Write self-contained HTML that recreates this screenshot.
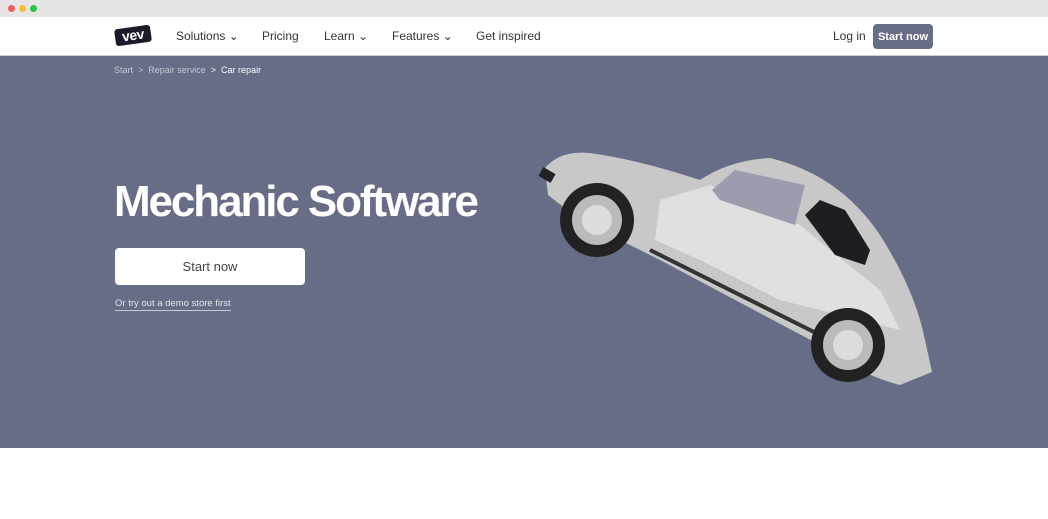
<!DOCTYPE html>
<html><head><meta charset="utf-8"><style>
*{margin:0;padding:0;box-sizing:border-box}
body{width:1048px;height:519px;overflow:hidden;background:#fff;font-family:"Liberation Sans",sans-serif;position:relative}
.top{position:absolute;left:0;top:0;width:1048px;height:17px;background:#e6e6e6}
.dot{position:absolute;top:5px;width:7px;height:7px;border-radius:50%}
.nav{position:absolute;top:17px;left:0;width:1048px;height:39px;background:#fff;border-bottom:1px solid #ccc}
.nav span{position:absolute;top:12px;font-size:12px;color:#333}
.hero{position:absolute;top:56px;left:0;width:1048px;height:392px;background:#676c87}
.bc{position:absolute;top:9px;font-size:9px;color:#c7c9d4}
h1{position:absolute;left:114px;top:121px;font-size:44px;font-weight:bold;color:#fff;letter-spacing:-2.1px}
.btn{position:absolute;left:115px;top:192px;width:190px;height:37px;background:#fff;border-radius:4px;text-align:center;line-height:37px;font-size:13px;color:#444}
.demo{position:absolute;left:115px;top:242px;font-size:9.5px;color:#e6e7ee;border-bottom:1px solid #c9cbd6;padding-bottom:1px}
.sn{position:absolute;left:873px;top:7px;width:60px;height:25px;background:#676c87;border-radius:4px;color:#fff;font-size:11px;font-weight:bold;display:flex;align-items:center;justify-content:center}
</style></head><body>
<div class="top"><div class="dot" style="left:8px;background:#ef5f57"></div><div class="dot" style="left:19px;background:#f5bd2f"></div><div class="dot" style="left:30px;background:#29c840"></div></div>
<div class="nav">
<div style="position:absolute;left:115px;top:10px;width:36px;height:17px;background:#1d1a2b;border-radius:3px;transform:rotate(-8deg);color:#fff;font-weight:bold;font-size:14px;line-height:16px;text-align:center;letter-spacing:-0.5px">vev</div>
<span style="left:176px">Solutions ⌄</span>
<span style="left:262px">Pricing</span>
<span style="left:324px">Learn ⌄</span>
<span style="left:392px">Features ⌄</span>
<span style="left:476px">Get inspired</span>
<span style="left:833px">Log in</span>
<div class="sn">Start now</div>
</div>
<div class="hero">
<span class="bc" style="left:114px">Start &nbsp;&gt;&nbsp; Repair service &nbsp;<b style="color:#fff;font-weight:normal">&gt;&nbsp; Car repair</b></span>
<h1>Mechanic Software</h1>
<div class="btn">Start now</div>
<div class="demo">Or try out a demo store first</div>
</div>
<svg style="position:absolute;left:0;top:0" width="1048" height="519">
<path fill="#c8c8c8" d="M545,168 Q560,150 590,153 Q640,160 700,180 Q730,160 770,158 Q840,175 880,235 Q915,290 925,340 L932,372 L900,385 Q860,375 820,345 L660,260 Q620,240 580,220 L548,195 Z"/>
<polygon fill="#e0e0e0" points="660,200 710,185 800,225 830,250 880,290 900,330 860,320 780,300 700,260 655,240"/>
<path d="M650,250 L830,340" stroke="#333" stroke-width="4"/>
<polygon fill="#9a9dad" points="712,190 735,170 805,185 795,225 720,200"/>
<polygon fill="#1e1e22" points="805,215 820,200 845,210 870,250 865,265 835,255"/>
<circle cx="597" cy="220" r="37" fill="#222"/><circle cx="597" cy="220" r="25" fill="#bbb"/><circle cx="597" cy="220" r="15" fill="#ddd"/>
<circle cx="848" cy="345" r="37" fill="#222"/><circle cx="848" cy="345" r="25" fill="#bbb"/><circle cx="848" cy="345" r="15" fill="#ddd"/>
<rect x="540" y="170" width="14" height="10" fill="#222" transform="rotate(30 547 175)"/>
</svg>
</body></html>
